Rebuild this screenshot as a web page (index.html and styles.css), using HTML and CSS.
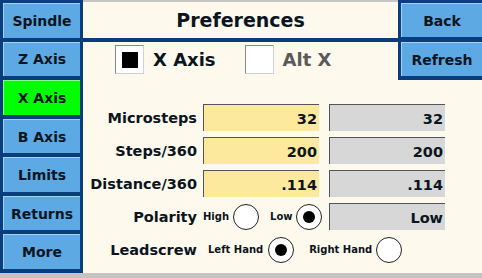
FILE: index.html
```html
<!DOCTYPE html>
<html lang="en">
<head>
  <meta charset="UTF-8" />
  <title>Preferences</title>
  <link rel="stylesheet" href="styles.css">
</head>
<body>
  <div class="screen">
    <!-- Left axis menu -->
    <div class="side left">
      <button class="nav">Spindle</button>
      <button class="nav">Z Axis</button>
      <button class="nav active">X Axis</button>
      <button class="nav">B Axis</button>
      <button class="nav">Limits</button>
      <button class="nav">Returns</button>
      <button class="nav">More</button>
    </div>

    <!-- Main panel -->
    <div class="main">
      <div class="top">
        <div class="head">
          <div class="title">Preferences</div>
          <div class="axis-select">
            <span class="check checked"></span>
            <span class="axis-name">X Axis</span>
            <span class="check"></span>
            <span class="axis-name dim">Alt X</span>
          </div>
        </div>
        <!-- Right actions -->
        <div class="side right">
          <button class="nav">Back</button>
          <button class="nav">Refresh</button>
        </div>
      </div>

      <div class="row">
        <span class="label">Microsteps</span>
        <span class="field edit">32</span>
        <span class="field view">32</span>
      </div>
      <div class="row">
        <span class="label">Steps/360</span>
        <span class="field edit">200</span>
        <span class="field view">200</span>
      </div>
      <div class="row">
        <span class="label">Distance/360</span>
        <span class="field edit">.114</span>
        <span class="field view">.114</span>
      </div>
      <div class="row">
        <span class="label">Polarity</span>
        <span class="opts">
          <span class="small high">High</span>
          <span class="radio"></span>
          <span class="small low">Low</span>
          <span class="radio on"></span>
        </span>
        <span class="field view">Low</span>
      </div>
      <div class="row">
        <span class="label">Leadscrew</span>
        <span class="small lh">Left Hand</span>
        <span class="radio on"></span>
        <span class="small rh">Right Hand</span>
        <span class="radio"></span>
      </div>
    </div>
  </div>
</body>
</html>
```

FILE: styles.css
```css
body {
  margin: 0;
  width: 482px;
  height: 278px;
  background-color: #c4c4c4;
  font-family: "DejaVu Sans", sans-serif;
  font-weight: bold;
  color: #0b1521;
  overflow: hidden;
}
.screen {
  display: grid;
  grid-template-columns: 83px 399px;
  height: 273px;
}
.side {
  background-color: #0a3d7e;
  display: flex;
  flex-direction: column;
  gap: 4px;
  padding: 3px 3px 4px 3px;
}
.side.right {
  width: 81px;
  height: 74px;
  padding: 3px 0 3px 3px;
  gap: 5px;
  flex: none;
}
.nav {
  flex: 1;
  margin: 0;
  padding: 0;
  font-family: "DejaVu Sans", sans-serif;
  font-weight: bold;
  font-size: 14px;
  color: #0b1521;
  background-color: #5da9e4;
  border: none;
  border-top: 1px solid #a6d2f4;
  border-left: 1px solid #a6d2f4;
}
.side.right .nav {
  flex: none;
  height: 34px;
}
.nav.active {
  background-color: #00ff00;
  border-color: #80ff80;
}
.main {
  background-color: #fdf9ec;
  display: flex;
  flex-direction: column;
}
.top {
  display: flex;
  align-items: flex-start;
  margin-bottom: 24px;
}
.head {
  flex: 1;
  border-top: 2px solid #c4c4c4;
}
.title {
  height: 36px;
  line-height: 36px;
  text-align: center;
  font-size: 19px;
  border-bottom: 4px solid #0a3d7e;
}
.axis-select {
  display: flex;
  align-items: center;
  height: 29px;
  margin: 3px 0 0 32px;
  font-size: 18px;
}
.check {
  width: 27px;
  height: 27px;
  background: white;
  border: 1px solid #8a8a8a;
  border-right-color: #d0d0d0;
  border-bottom-color: #d0d0d0;
  position: relative;
}
.check.checked::after {
  content: "";
  position: absolute;
  left: 6px;
  top: 6px;
  width: 16px;
  height: 16px;
  background: black;
}
.axis-name {
  margin: 0 29px 0 9px;
}
.axis-name.dim {
  color: #5a5a5a;
  margin-left: 9px;
}
.row {
  display: flex;
  align-items: center;
  height: 27px;
  margin-bottom: 6px;
  font-size: 14.5px;
  white-space: nowrap;
}
.label {
  width: 114px;
  text-align: right;
  flex: none;
}
.field {
  height: 27px;
  line-height: 28px;
  text-align: right;
  padding-right: 2px;
  border-top: 1px solid #555;
  border-left: 1px solid #555;
  box-sizing: border-box;
  flex: none;
}
.field.edit {
  width: 116px;
  margin-left: 6px;
  background-color: #fde99d;
}
.field.view {
  width: 116px;
  margin-left: 10px;
  background-color: #d7d7d7;
}
.opts {
  width: 116px;
  margin-left: 6px;
  display: flex;
  align-items: center;
  flex: none;
}
.small {
  font-size: 10px;
}
.radio {
  width: 24px;
  height: 24px;
  border: 1px solid #222;
  border-radius: 50%;
  background: white;
  position: relative;
  flex: none;
}
.radio.on::after {
  content: "";
  position: absolute;
  left: 6px;
  top: 6px;
  width: 12px;
  height: 12px;
  border-radius: 50%;
  background: black;
}
.high {
  margin-right: 4px;
}
.low {
  margin: 0 3px 0 11px;
}
.lh {
  margin: 0 5px 0 11px;
}
.rh {
  margin: 0 4px 0 15px;
}
```
